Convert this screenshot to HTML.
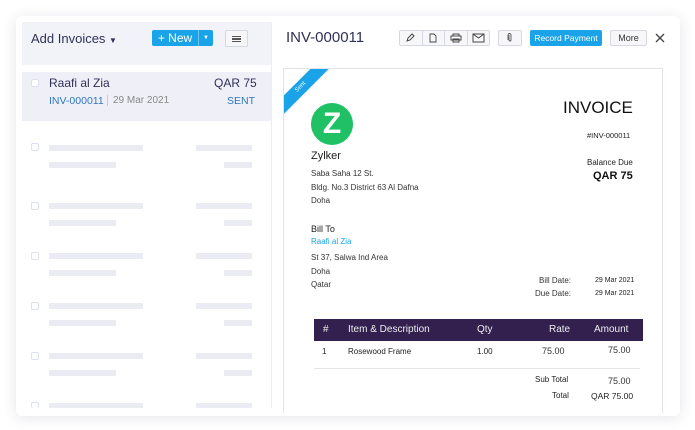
<!DOCTYPE html>
<html><head><meta charset="utf-8"><style>
*{margin:0;padding:0;box-sizing:border-box}
body{width:695px;height:430px;background:#fff;font-family:"Liberation Sans",sans-serif;position:relative;overflow:hidden}
.a{position:absolute}
.card{left:16px;top:16px;width:664px;height:400px;background:#fff;border-radius:6px;box-shadow:0 2px 14px rgba(40,40,80,.12)}
.bar{position:absolute;background:#ebebf4;height:6px}
.cb{position:absolute;width:8px;height:8px;border:1px solid #dde0f0;border-radius:2px;background:#fff}
.t{position:absolute;white-space:nowrap}
.ib{position:absolute;top:30px;height:16px;border:1px solid #d6d8e0;background:#f7f7f9}
</style></head><body>
<div class="a card"></div>
<div class="a" style="left:22px;top:22px;width:249px;height:43px;background:#f2f3f9"></div>
<div class="a" style="left:271px;top:22px;width:1px;height:386px;background:#eceef5"></div>
<div class="t" style="left:31px;top:31px;font-size:13px;color:#2f3157">Add Invoices <span style="font-size:8px">▼</span></div>
<div class="a" style="left:152px;top:30px;width:46px;height:16px;background:#1aa3e8;border-radius:2px 0 0 2px;color:#fff;font-size:12px;line-height:16px;text-align:center">+ New</div>
<div class="a" style="left:198px;top:30px;width:15px;height:16px;background:#1aa3e8;border-left:1px solid #6cc6f2;border-radius:0 2px 2px 0;color:#fff;font-size:6px;line-height:16px;text-align:center">▼</div>
<div class="a" style="left:225px;top:30px;width:23px;height:17px;border:1px solid #d6d8e0;border-radius:2px;background:#f7f7f9"><div style="margin:5px auto 0;width:9px;height:6px;border-top:1.5px solid #555;border-bottom:1.5px solid #555;position:relative"><div style="position:absolute;top:1px;left:0;width:9px;height:1.5px;background:#555"></div></div></div>
<div class="a" style="left:22px;top:72px;width:249px;height:49px;background:#eff0f7"></div>
<div class="cb" style="left:31px;top:79px"></div>
<div class="t" style="left:49px;top:76px;font-size:12px;color:#2f3157">Raafi al Zia</div>
<div class="t" style="left:214px;top:76px;font-size:12px;color:#2f3157">QAR 75</div>
<div class="t" style="left:49px;top:95px;font-size:10.5px;color:#2e77c0">INV-000011</div>
<div class="a" style="left:107px;top:95px;width:1px;height:11px;background:#ccc"></div>
<div class="t" style="left:113px;top:95px;font-size:10px;color:#888">29 Mar 2021</div>
<div class="t" style="left:227px;top:95px;font-size:10.5px;color:#2e77c0">SENT</div>
<div class="cb" style="left:31px;top:143px"></div><div class="bar" style="left:49px;top:145px;width:94px"></div><div class="bar" style="left:49px;top:162px;width:67px"></div><div class="bar" style="left:196px;top:145px;width:56px"></div><div class="bar" style="left:224px;top:162px;width:28px"></div>
<div class="cb" style="left:31px;top:202px"></div><div class="bar" style="left:49px;top:203px;width:94px"></div><div class="bar" style="left:49px;top:220px;width:67px"></div><div class="bar" style="left:196px;top:203px;width:56px"></div><div class="bar" style="left:224px;top:220px;width:28px"></div>
<div class="cb" style="left:31px;top:252px"></div><div class="bar" style="left:49px;top:253px;width:94px"></div><div class="bar" style="left:49px;top:270px;width:67px"></div><div class="bar" style="left:196px;top:253px;width:56px"></div><div class="bar" style="left:224px;top:270px;width:28px"></div>
<div class="cb" style="left:31px;top:302px"></div><div class="bar" style="left:49px;top:303px;width:94px"></div><div class="bar" style="left:49px;top:320px;width:67px"></div><div class="bar" style="left:196px;top:303px;width:56px"></div><div class="bar" style="left:224px;top:320px;width:28px"></div>
<div class="cb" style="left:31px;top:352px"></div><div class="bar" style="left:49px;top:353px;width:94px"></div><div class="bar" style="left:49px;top:370px;width:67px"></div><div class="bar" style="left:196px;top:353px;width:56px"></div><div class="bar" style="left:224px;top:370px;width:28px"></div>
<div class="cb" style="left:31px;top:402px;height:6px;border-bottom:none"></div><div class="bar" style="left:49px;top:403px;width:94px;height:5px"></div><div class="bar" style="left:196px;top:403px;width:56px;height:5px"></div>
<div class="t" style="left:286px;top:29px;font-size:15px;color:#2f3157">INV-000011</div>
<div class="ib" style="left:399px;width:91px;border-radius:2px"></div>
<div class="a" style="left:422px;top:31px;width:1px;height:14px;background:#d6d8e0"></div>
<div class="a" style="left:444px;top:31px;width:1px;height:14px;background:#d6d8e0"></div>
<div class="a" style="left:467px;top:31px;width:1px;height:14px;background:#d6d8e0"></div>
<svg class="a" style="left:405px;top:33px" width="10" height="10" viewBox="0 0 10 10"><path d="M2 8l1-3 4-4 2 2-4 4z" fill="none" stroke="#444" stroke-width="1"/></svg>
<svg class="a" style="left:429px;top:33px" width="8" height="10" viewBox="0 0 8 10"><path d="M1 1h4l2 2v6H1z" fill="none" stroke="#444" stroke-width=".9"/></svg>
<svg class="a" style="left:450px;top:33px" width="12" height="10" viewBox="0 0 12 10"><path d="M3 3V1h6v2M1 3h10v4H1zM3 6h6v3H3z" fill="#fff" stroke="#444" stroke-width="1"/></svg>
<svg class="a" style="left:472px;top:33px" width="13" height="10" viewBox="0 0 13 10"><path d="M1 1h11v8H1zM1 1l5.5 4L12 1" fill="none" stroke="#444" stroke-width="1"/></svg>
<div class="ib" style="left:498px;width:24px;border-radius:2px"></div>
<svg class="a" style="left:507px;top:33px" width="6" height="10" viewBox="0 0 6 10"><path d="M2 2v5a1 1 0 002 0V2a1.5 1.5 0 00-3 0v5" fill="none" stroke="#555" stroke-width=".9"/></svg>
<div class="a" style="left:530px;top:30px;width:72px;height:16px;background:#1aa3e8;border-radius:2px;color:#fff;font-size:8.5px;line-height:16px;text-align:center">Record Payment</div>
<div class="ib" style="left:610px;width:37px;border-radius:2px;font-size:9px;color:#333;text-align:center;line-height:14px">More</div>
<svg class="a" style="left:655px;top:33px" width="10" height="10" viewBox="0 0 10 10"><path d="M1 1l8 8M9 1l-8 8" stroke="#444" stroke-width="1.3"/></svg>
<div class="a" style="left:283px;top:68px;width:380px;height:345px;border:1px solid #e2e3ea;border-bottom:none;background:#fff;overflow:hidden">
<div class="a" style="left:-38px;top:12px;width:110px;height:13px;background:#1aa3e8;transform:rotate(-45deg);color:#fff;font-size:6px;text-align:center;line-height:13px">Sent</div>
</div>
<div class="a" style="left:311px;top:103px;width:42px;height:42px;border-radius:50%;background:#20c064;color:#fff;font-size:30px;font-weight:bold;text-align:center;line-height:42px">Z</div>
<div class="t" style="left:311px;top:150px;font-size:11px;color:#222">Zylker</div>
<div class="t" style="left:311px;top:167px;font-size:8px;color:#333;line-height:13.5px">Saba Saha 12 St.<br>Bldg. No.3 District 63 Al Dafna<br>Doha</div>
<div class="t" style="left:563px;top:98px;font-size:17px;color:#111">INVOICE</div>
<div class="t" style="left:587px;top:131px;font-size:7.5px;color:#222">#INV-000011</div>
<div class="t" style="left:587px;top:158px;font-size:8px;color:#222">Balance Due</div>
<div class="t" style="left:593px;top:170px;font-size:11px;color:#111;font-weight:bold">QAR 75</div>
<div class="t" style="left:311px;top:224px;font-size:9px;color:#222">Bill To</div>
<div class="t" style="left:311px;top:237px;font-size:8px;color:#1aa3e8">Raafi al Zia</div>
<div class="t" style="left:311px;top:251px;font-size:8px;color:#333;line-height:13.5px">St 37, Salwa Ind Area<br>Doha<br>Qatar</div>
<div class="t" style="left:539px;top:276px;font-size:8px;color:#333">Bill Date:</div>
<div class="t" style="left:595px;top:277px;font-size:7px;color:#222">29 Mar 2021</div>
<div class="t" style="left:535px;top:289px;font-size:8px;color:#333">Due Date:</div>
<div class="t" style="left:595px;top:290px;font-size:7px;color:#222">29 Mar 2021</div>
<div class="a" style="left:314px;top:319px;width:329px;height:22px;background:#33204f;color:#eee;font-size:10px;line-height:22px">
<span class="t" style="left:9px">#</span><span class="t" style="left:34px">Item &amp; Description</span><span class="t" style="left:163px">Qty</span><span class="t" style="left:235px">Rate</span><span class="t" style="left:280px">Amount</span></div>
<div class="t" style="left:322px;top:347px;font-size:8px;color:#222">1</div>
<div class="t" style="left:348px;top:347px;font-size:8px;color:#222">Rosewood Frame</div>
<div class="t" style="left:477px;top:347px;font-size:8px;color:#222">1.00</div>
<div class="t" style="left:542px;top:346px;font-size:9px;color:#333">75.00</div>
<div class="t" style="left:608px;top:345px;font-size:9px;color:#333">75.00</div>
<div class="a" style="left:314px;top:368px;width:326px;height:1px;background:#e4e4ea"></div>
<div class="t" style="left:535px;top:375px;font-size:8px;color:#222">Sub Total</div>
<div class="t" style="left:608px;top:376px;font-size:9px;color:#333">75.00</div>
<div class="t" style="left:552px;top:391px;font-size:8px;color:#222">Total</div>
<div class="t" style="left:591px;top:391px;font-size:8.5px;color:#222">QAR 75.00</div>
</body></html>
